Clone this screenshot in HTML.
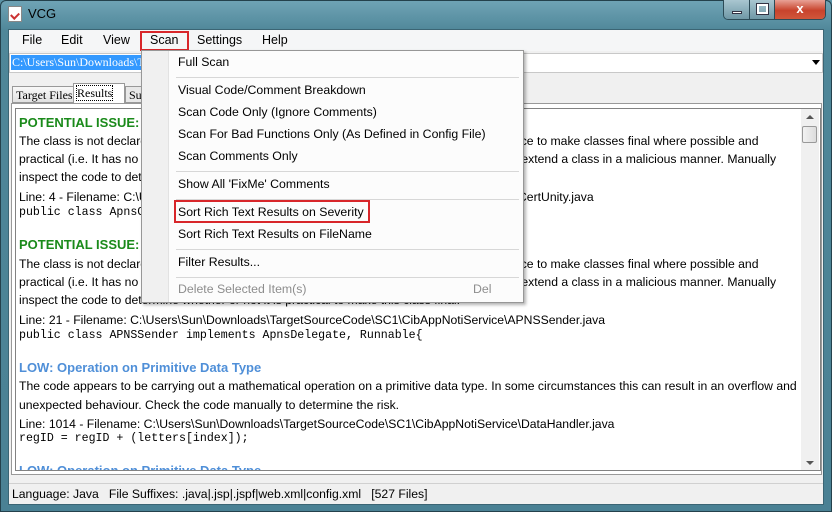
<!DOCTYPE html>
<html><head><meta charset="utf-8"><style>
*{margin:0;padding:0;box-sizing:border-box}
body{width:832px;height:512px;position:relative;overflow:hidden;background:#5b93a6;font-family:"Liberation Sans",sans-serif;font-size:12px;color:#000}
.a{position:absolute;white-space:nowrap}
.frame{position:absolute;left:0;top:0;width:832px;height:512px;background:linear-gradient(#6fa3b5,#4f8799 30px,#4a8194);border:1px solid #24414c;border-radius:6px 6px 0 0}
.client{position:absolute;left:8px;top:29px;width:816px;height:476px;background:#f0f0f0;border:1px solid #3b6574}
.t{font-size:12.2px;line-height:18px}
.m{font-family:"Liberation Mono",monospace;font-size:11.6px}
.g{color:#1a8a1a;font-weight:bold;font-size:13px}
.b{color:#4f8fd8;font-weight:bold;font-size:13px}
.mi{position:absolute;left:36px;font-size:12.3px;white-space:nowrap}
.sep{position:absolute;left:34px;right:4px;height:1px;background:#d7d7d7}
</style></head><body>
<div class="frame"></div>
<div class="a" style="left:8px;top:6px;width:14px;height:16px;background:#fff;border:1px solid #888"><div style="position:absolute;left:2px;top:5px;width:8px;height:6px;border-left:2px solid #c33;border-bottom:2px solid #c33;transform:rotate(-45deg)"></div></div>
<div class="a" style="left:28px;top:6px;font-size:13px;color:#000">VCG</div>
<div class="a" style="left:723px;top:0;width:103px;height:20px;border:1px solid #2c4b57;border-top:none;border-radius:0 0 5px 5px;overflow:hidden;display:flex">
<div style="width:26px;background:linear-gradient(#a9c6d0,#6f98a6);border-right:1px solid #2c4b57;position:relative"><div style="position:absolute;left:8px;top:11px;width:10px;height:3px;background:#fff;border:1px solid #334"></div></div>
<div style="width:25px;background:linear-gradient(#a9c6d0,#6f98a6);border-right:1px solid #2c4b57;position:relative"><div style="position:absolute;left:7px;top:4px;width:11px;height:10px;border:2px solid #fff;outline:1px solid #334"></div></div>
<div style="flex:1;background:linear-gradient(#e8a296,#c8432c 55%,#d0573b);color:#fff;font-weight:bold;text-align:center;font-size:13px;line-height:18px">x</div>
</div>
<div class="client">
<div class="a" style="left:0;top:0;width:814px;height:21px;background:#f5f6f7"></div>
<div class="a" style="left:13px;top:3px;font-size:12.5px">File</div>
<div class="a" style="left:52px;top:3px;font-size:12.5px">Edit</div>
<div class="a" style="left:94px;top:3px;font-size:12.5px">View</div>
<div class="a" style="left:131px;top:1px;width:49px;height:20px;border:2px solid #d8262a"></div>
<div class="a" style="left:141px;top:3px;font-size:12.5px">Scan</div>
<div class="a" style="left:188px;top:3px;font-size:12.5px">Settings</div>
<div class="a" style="left:253px;top:3px;font-size:12.5px">Help</div>
<div class="a" style="left:0;top:23px;width:814px;height:20px;background:#fff;border:1px solid #c8c8c8"></div>
<div class="a" style="left:2px;top:25px;height:15px;background:#3399ff;color:#fff;font-family:'Liberation Serif',serif;font-size:12px;padding:0 1px">C:\Users\Sun\Downloads\TargetSourceCode</div>
<div class="a" style="left:803px;top:30px;border-left:4px solid transparent;border-right:4px solid transparent;border-top:5px solid #000"></div>
<div class="a" style="left:3px;top:56px;width:62px;height:17px;border:1px solid #999;background:linear-gradient(#f8f8f8,#e2e2e2);font-family:'Liberation Serif',serif;font-size:12px;padding:1px 3px">Target Files</div>
<div class="a" style="left:64px;top:53px;width:52px;height:21px;border:1px solid #999;border-bottom:none;background:#fff;font-family:'Liberation Serif',serif;font-size:12px;padding:2px 3px"><span style="outline:1px dotted #000">Results</span></div>
<div class="a" style="left:116px;top:56px;width:30px;height:17px;border:1px solid #999;background:#e8e8e8;font-family:'Liberation Serif',serif;font-size:12px;padding:1px 3px">Su</div>
<div class="a" style="left:2px;top:73px;width:811px;height:372px;background:#fff;border:1px solid #999"></div>
<div class="a" style="left:6px;top:78px;width:806px;height:363px;background:#fff;border:1px solid #828282;overflow:hidden">
<div class="a" style="left:785px;top:0;width:18px;height:363px;background:#f0f0f0"></div>
<div class="a" style="left:790px;top:6px;border-left:4px solid transparent;border-right:4px solid transparent;border-bottom:4px solid #555"></div>
<div class="a" style="left:786px;top:17px;width:15px;height:17px;border:1px solid #999;border-radius:2px;background:linear-gradient(90deg,#f2f2f2,#dcdcdc)"></div>
<div class="a" style="left:790px;top:352px;border-left:4px solid transparent;border-right:4px solid transparent;border-top:4px solid #555"></div>
<div class="a g" style="left:3px;top:6px">POTENTIAL ISSUE: Class Not Declared as Final</div>
<div class="a t" style="left:3px;top:23px">The class is not declared as final as per IBM Secure Coding Practice</div>
<div class="a t" style="left:502px;top:23px">ice to make classes final where possible and</div>
<div class="a t" style="left:3px;top:41px">practical (i.e. It has no child classes). This would allow an attacker to</div>
<div class="a t" style="left:502px;top:41px">&nbsp;extend a class in a malicious manner. Manually</div>
<div class="a t" style="left:3px;top:59px">inspect the code to determine whether or not it is practical</div>
<div class="a t" style="left:3px;top:79px">Line: 4 - Filename: C:\Users\Sun\Downloads\TargetSourceCode\SC1\</div>
<div class="a t" style="left:502px;top:79px">CertUnity.java</div>
<div class="a m" style="left:3px;top:97px">public class ApnsCertUnity</div>
<div class="a g" style="left:3px;top:128px">POTENTIAL ISSUE: Class Not Declared as Final</div>
<div class="a t" style="left:3px;top:146px">The class is not declared as final as per IBM Secure Coding Practice</div>
<div class="a t" style="left:502px;top:146px">ice to make classes final where possible and</div>
<div class="a t" style="left:3px;top:164px">practical (i.e. It has no child classes). This would allow an attacker to</div>
<div class="a t" style="left:502px;top:164px">&nbsp;extend a class in a malicious manner. Manually</div>
<div class="a t" style="left:3px;top:182px">inspect the code to determine whether or not it is practical to make this class final.</div>
<div class="a t" style="left:3px;top:202px">Line: 21 - Filename: C:\Users\Sun\Downloads\TargetSourceCode\SC1\CibAppNotiService\APNSSender.java</div>
<div class="a m" style="left:3px;top:220px">public class APNSSender implements ApnsDelegate, Runnable{</div>
<div class="a b" style="left:3px;top:251px">LOW: Operation on Primitive Data Type</div>
<div class="a t" style="left:3px;top:268px">The code appears to be carrying out a mathematical operation on a primitive data type. In some circumstances this can result in an overflow and</div>
<div class="a t" style="left:3px;top:287px">unexpected behaviour. Check the code manually to determine the risk.</div>
<div class="a t" style="left:3px;top:306px">Line: 1014 - Filename: C:\Users\Sun\Downloads\TargetSourceCode\SC1\CibAppNotiService\DataHandler.java</div>
<div class="a m" style="left:3px;top:323px">regID = regID + (letters[index]);</div>
<div class="a b" style="left:3px;top:354px">LOW: Operation on Primitive Data Type</div>
</div>
<div class="a" style="left:0;top:453px;width:814px;height:21px;border-top:1px solid #d0d0d0;background:#f0f0f0"></div>
<div class="a" style="left:3px;top:457px;font-size:12.2px">Language: Java &nbsp; File Suffixes: .java|.jsp|.jspf|web.xml|config.xml &nbsp; [527 Files]</div>
</div>
<div class="a" style="left:141px;top:50px;width:383px;height:253px;background:#f0f0f0;border:1px solid #979797;box-shadow:2px 2px 3px rgba(0,0,0,.3)">
<div class="a" style="left:26px;top:0;width:355px;height:251px;background:#fcfcfc;border-left:1px solid #e2e2e2"></div>
<div class="mi" style="top:4px">Full Scan</div>
<div class="sep" style="top:26px"></div>
<div class="mi" style="top:32px">Visual Code/Comment Breakdown</div>
<div class="mi" style="top:54px">Scan Code Only (Ignore Comments)</div>
<div class="mi" style="top:76px">Scan For Bad Functions Only (As Defined in Config File)</div>
<div class="mi" style="top:98px">Scan Comments Only</div>
<div class="sep" style="top:120px"></div>
<div class="mi" style="top:126px">Show All 'FixMe' Comments</div>
<div class="sep" style="top:148px"></div>
<div class="a" style="left:32px;top:149px;width:196px;height:23px;border:2px solid #d8262a"></div>
<div class="mi" style="top:154px">Sort Rich Text Results on Severity</div>
<div class="mi" style="top:176px">Sort Rich Text Results on FileName</div>
<div class="sep" style="top:198px"></div>
<div class="mi" style="top:204px">Filter Results...</div>
<div class="sep" style="top:226px"></div>
<div class="mi" style="top:231px;color:#8d8d8d">Delete Selected Item(s)</div>
<div class="mi" style="top:231px;left:331px;color:#8d8d8d">Del</div>
</div>
</body></html>
